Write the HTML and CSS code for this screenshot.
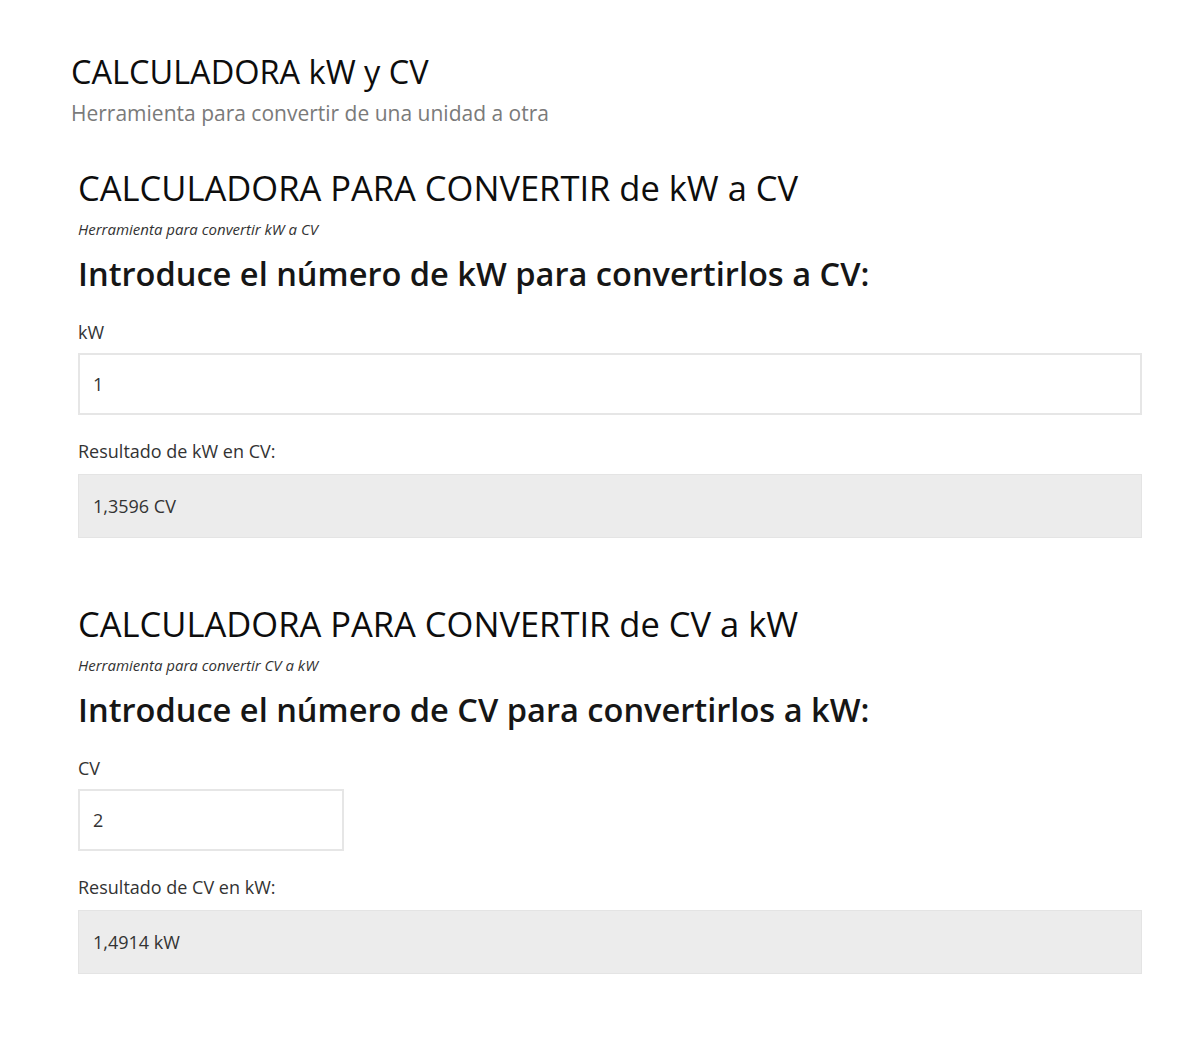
FILE: index.html
```html
<!DOCTYPE html>
<html lang="es">
<head>
<meta charset="utf-8">
<title>Calculadora kW y CV</title>
<link rel="stylesheet" href="styles.css">
</head>
<body>
<div class="page">
  <header class="top">
    <h1 class="title">CALCULADORA kW y CV</h1>
    <p class="subtitle">Herramienta para convertir de una unidad a otra</p>
  </header>

  <section class="calc">
    <h2 class="calc-title">CALCULADORA PARA CONVERTIR de kW a CV</h2>
    <p class="calc-sub">Herramienta para convertir kW a CV</p>
    <h3 class="calc-prompt">Introduce el número de kW para convertirlos a CV:</h3>
    <label class="field-label" for="kw">kW</label>
    <input class="field-input" id="kw" type="text" value="1">
    <div class="field-label result-label">Resultado de kW en CV:</div>
    <div class="result">1,3596 CV</div>
  </section>

  <section class="calc calc-second">
    <h2 class="calc-title">CALCULADORA PARA CONVERTIR de CV a kW</h2>
    <p class="calc-sub">Herramienta para convertir CV a kW</p>
    <h3 class="calc-prompt">Introduce el número de CV para convertirlos a kW:</h3>
    <label class="field-label" for="cv">CV</label>
    <input class="field-input field-small" id="cv" type="text" value="2">
    <div class="field-label result-label">Resultado de CV en kW:</div>
    <div class="result">1,4914 kW</div>
  </section>
</div>
</body>
</html>
```

FILE: styles.css
```css
* { box-sizing: border-box; }
html, body { margin: 0; padding: 0; background: #fff; }
body {
  font-family: "Open Sans", "Noto Sans", "DejaVu Sans", sans-serif;
  color: #111;
}
.page {
  padding: 49px 58px 0 71px;
}
.top { margin-bottom: 39px; }
.title {
  margin: 0;
  font-size: 32.5px;
  font-weight: 500;
  line-height: 46px;
  color: #0d0d0d;
}
.subtitle {
  margin: 5px 0 0;
  font-size: 21px;
  line-height: 26px;
  color: #7a7a7a;
}
.calc { padding-left: 7px; }
.calc-second { margin-top: 63px; }
.calc-title {
  margin: 0;
  font-size: 34.5px;
  font-weight: 500;
  line-height: 46px;
  color: #0d0d0d;
}
.calc-sub {
  margin: 9px 0 0;
  font-size: 15px;
  font-style: italic;
  line-height: 18px;
  color: #333;
}
.calc-prompt {
  margin: 13px 0 0;
  font-size: 32.6px;
  font-weight: 600;
  line-height: 46px;
  color: #161616;
}
.field-label {
  display: block;
  margin-top: 22px;
  font-size: 18px;
  font-weight: 500;
  line-height: 26px;
  color: #333;
}
.result-label { margin-top: 23px; }
.field-input {
  display: block;
  width: 100%;
  height: 62px;
  margin-top: 8px;
  padding: 0 13px;
  border: 2px solid #e6e6e6;
  background: #fff;
  font-family: inherit;
  font-size: 18px;
  color: #333;
  outline: none;
}
.field-small { width: 266px; }
.result {
  margin-top: 10px;
  height: 64px;
  padding: 0 14px;
  display: flex;
  align-items: center;
  background: #ececec;
  border: 1px solid #e4e4e4;
  font-size: 18px;
  color: #333;
}
```
